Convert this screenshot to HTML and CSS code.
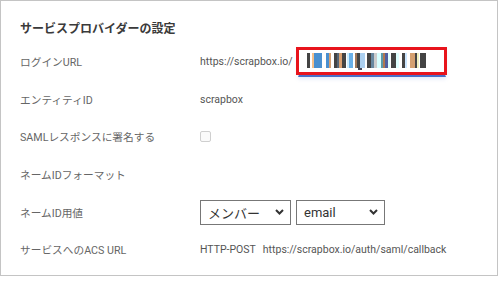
FILE: index.html
```html
<!DOCTYPE html>
<html lang="ja">
<head>
<meta charset="utf-8">
<link rel="stylesheet" href="styles.css">
</head>
<body>
<div class="card">
  <h2 class="title">サービスプロバイダーの設定</h2>
  <div class="form">
    <div class="label">ログインURL</div>
    <div class="value">
      <span class="url-prefix">https://scrapbox.io/</span>
      <div class="input-wrap">
        <div class="login-input"><div class="pixels"></div><div class="pixel-tail"></div></div>
        <div class="highlight"></div>
      </div>
    </div>

    <div class="label">エンティティID</div>
    <div class="value">scrapbox</div>

    <div class="label">SAMLレスポンスに署名する</div>
    <div class="value"><span class="checkbox"></span></div>

    <div class="label">ネームIDフォーマット</div>
    <div class="value"></div>

    <div class="label">ネームID用値</div>
    <div class="value selects">
      <div class="select select-a">
        <span>メンバー</span>
        <svg class="chev" width="9" height="6" viewBox="0 0 9 6"><path d="M1 1 L4.5 4.5 L8 1" fill="none" stroke="#333" stroke-width="2"/></svg>
      </div>
      <div class="select select-b">
        <span>email</span>
        <svg class="chev" width="9" height="6" viewBox="0 0 9 6"><path d="M1 1 L4.5 4.5 L8 1" fill="none" stroke="#333" stroke-width="2"/></svg>
      </div>
    </div>

    <div class="label">サービスへのACS URL</div>
    <div class="value acs"><span>HTTP-POST</span><span>https://scrapbox.io/auth/saml/callback</span></div>
  </div>
</div>
</body>
</html>
```
FILE: styles.css
```css
html, body {
  margin: 0;
  padding: 0;
  background: #fff;
}
body {
  font-family: Roboto, "Noto Sans CJK JP", sans-serif;
  color: #555;
}
.card {
  width: 477px;
  height: 274px;
  border: 1px solid #c4c4c4;
  padding: 0 0 0 19px;
  box-sizing: content-box;
}
.title {
  margin: 0;
  padding-top: 18px;
  height: 20px;
  line-height: 20px;
  font-size: 12px;
  font-weight: 700;
  color: #3a3a3a;
}
.form {
  margin-top: 4px;
  display: grid;
  grid-template-columns: 180px 1fr;
  grid-auto-rows: 37.6px;
  align-items: center;
}
.label {
  font-size: 10.7px;
  color: #666;
}
.value {
  font-size: 10.5px;
  color: #555;
  display: flex;
  align-items: center;
}
.url-prefix {
  width: 96px;
  flex-shrink: 0;
}
.input-wrap {
  position: relative;
  width: 151px;
  height: 30px;
}
.login-input {
  margin: 2px 1px 0 2px;
  height: 28px;
  border: 1px solid #ddd;
  border-bottom: 2px solid #4a6fc7;
  box-shadow: 0 2px 4px rgba(74, 111, 199, 0.15);
  background: #fff;
  padding: 3px 0 0 8px;
  box-sizing: border-box;
}
.pixels {
  width: 119px;
  height: 15px;
  background: linear-gradient(to right,
    #444 0 3px, #fff 3px 5px, #f5c08a 5px 7px, #4a90d0 7px 15px, #fff 15px 19px,
    #4a90d0 19px 22px, #d9a070 22px 24px, #fff 24px 27px, #444 27px 30px,
    #567 30px 32px, #d9a070 32px 35px, #444 35px 39px, #fff 39px 40px,
    #cef 40px 42px, #6ab0e8 42px 46px, #fff 46px 48px, #a0785a 48px 50px,
    #444 50px 53px, #acd0f0 53px 58px, #fff 58px 60px, #444 60px 64px,
    #6888a0 64px 67px, #ccc 67px 70px, #d8ffff 70px 74px, #5a9aaa 74px 76px,
    #b07850 76px 78px, #5060a0 78px 81px, #e0ffff 81px 83px, #fff 83px 84px,
    #444 84px 89px, #e0ffff 89px 92px, #fff 92px 95px, #444 95px 98px,
    #cce6ff 98px 100px, #fff 100px 103px, #d4a070 103px 108px, #444 108px 110px,
    #f0f0c0 110px 112px, #fff 112px 113px, #444 113px 119px);
}
.pixel-tail {
  width: 4px;
  height: 2px;
  margin-left: 51px;
  background: #445;
}
.highlight {
  position: absolute;
  left: 0;
  top: 0;
  width: 151px;
  height: 28px;
  border: 3px solid #e8141c;
  box-sizing: border-box;
}
.checkbox {
  display: block;
  width: 11px;
  height: 11px;
  border: 1px solid #cfcfcf;
  border-radius: 2px;
  background: #fafafa;
  box-sizing: border-box;
}
.selects {
  gap: 5px;
}
.select {
  height: 25px;
  border: 1px solid #777;
  box-sizing: border-box;
  display: flex;
  align-items: center;
  justify-content: space-between;
  padding: 0 6px 0 7px;
  font-size: 13px;
  color: #333;
  background: #fff;
}
.select-a { width: 91px; }
.select-b { width: 89px; }
.chev { display: block; }
.acs {
  gap: 7px;
}
```
